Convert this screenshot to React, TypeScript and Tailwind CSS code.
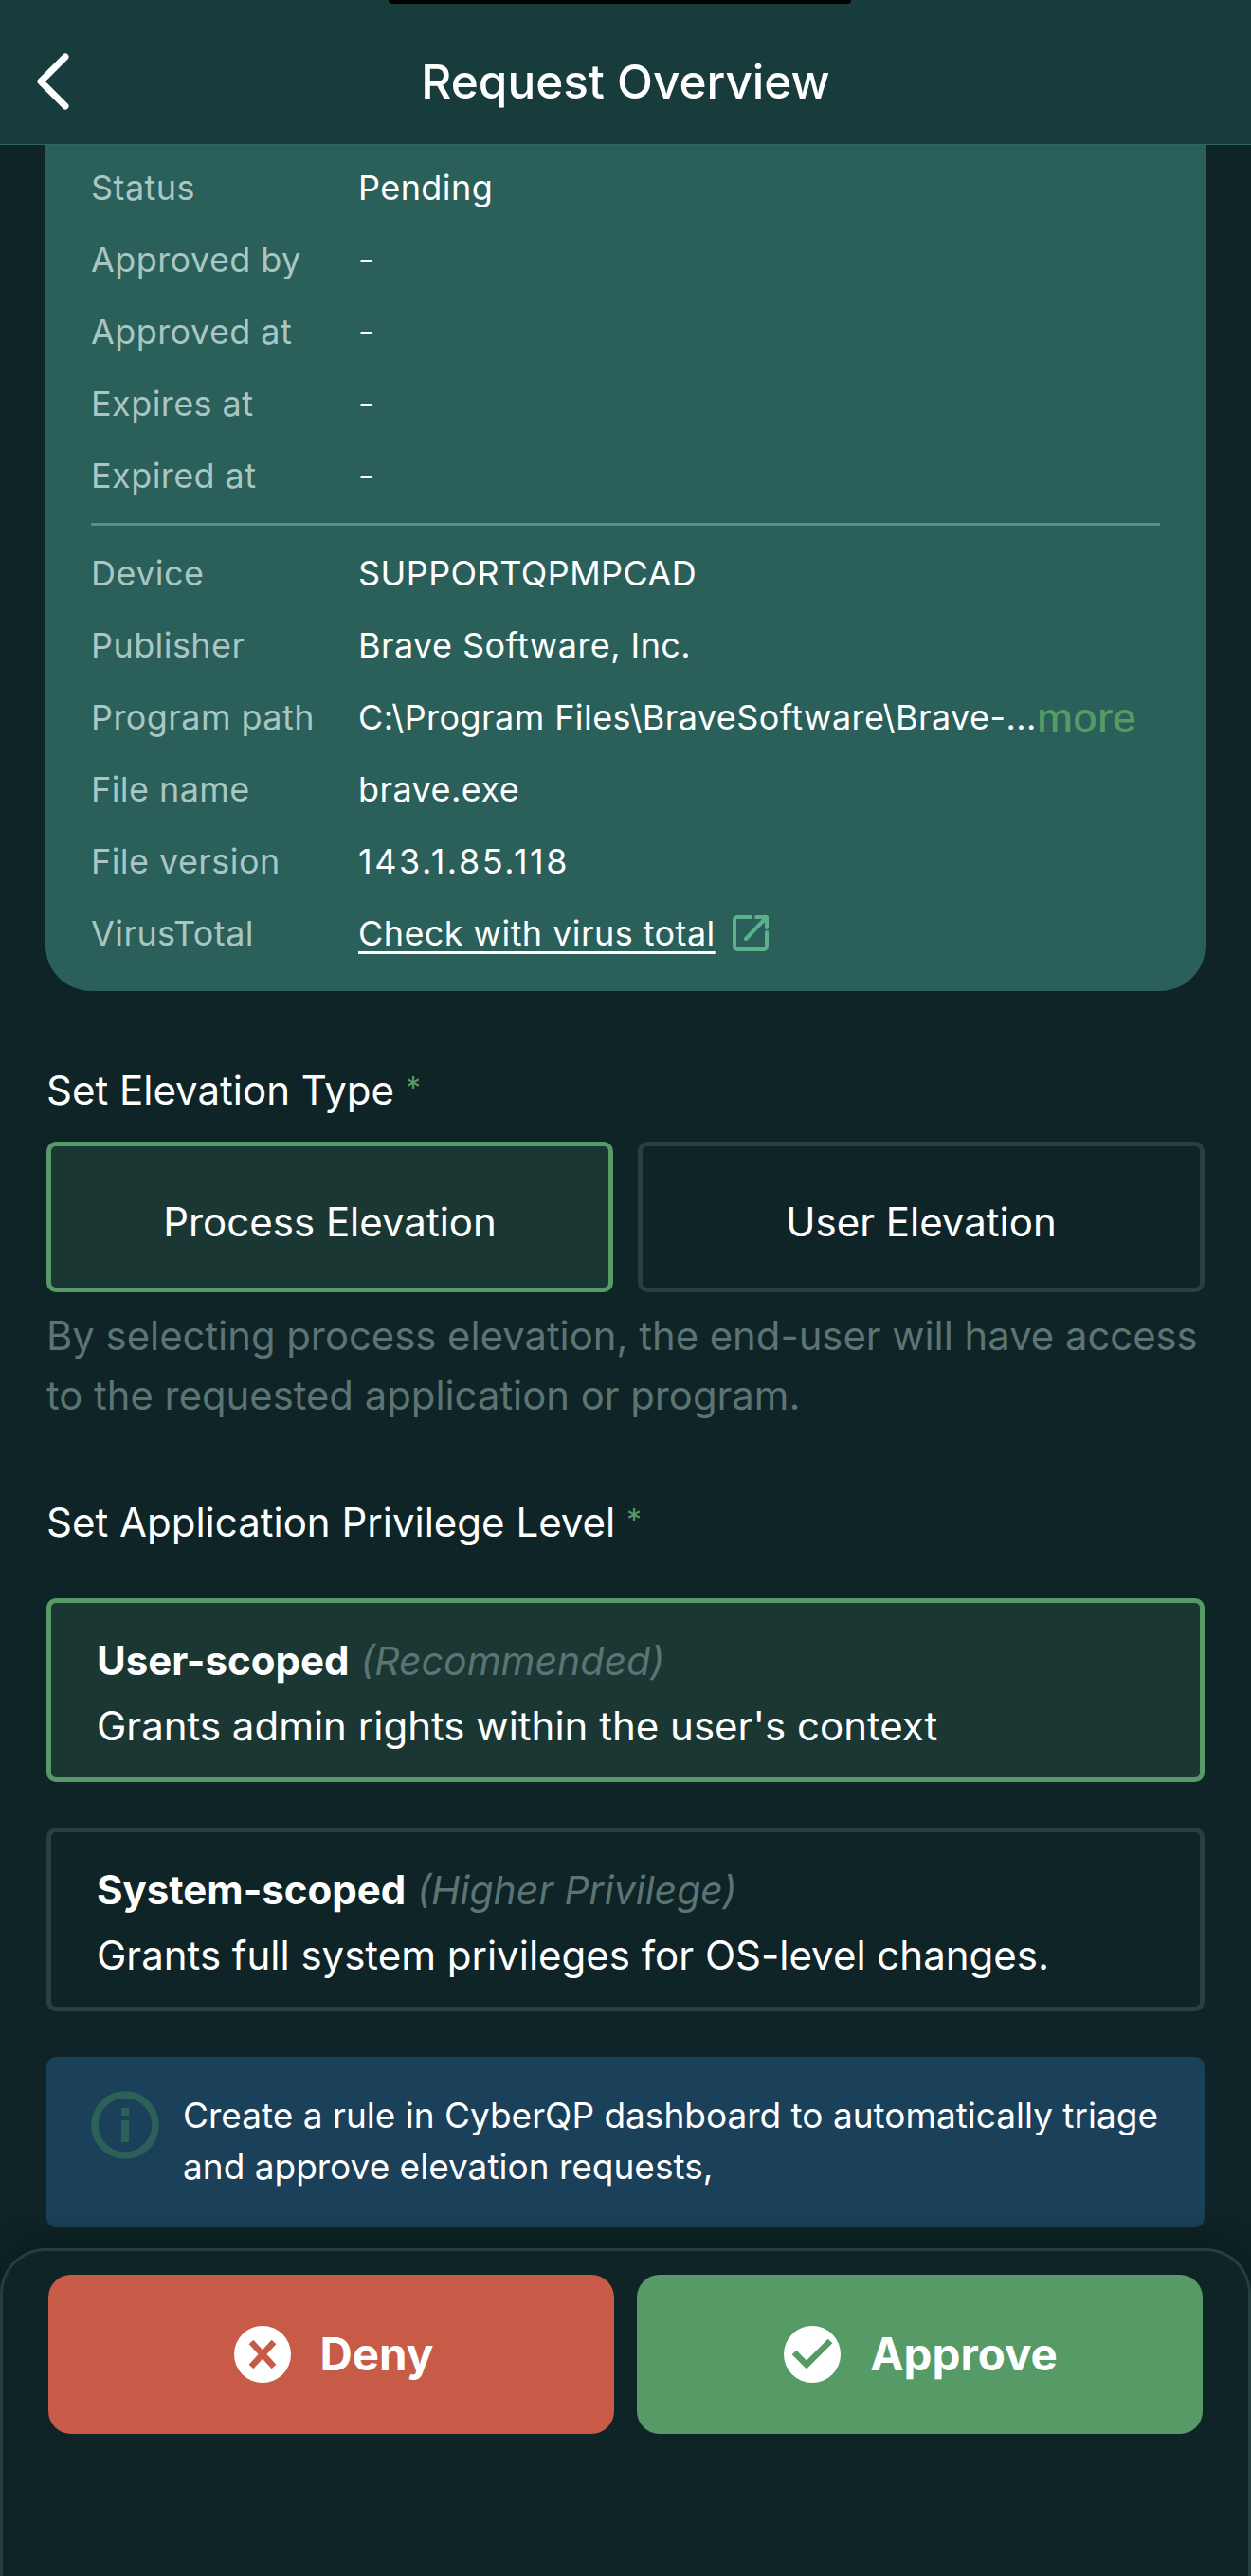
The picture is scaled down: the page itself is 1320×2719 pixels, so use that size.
const statusRows = [
  { label: 'Status', value: 'Pending' },
  { label: 'Approved by', value: '-' },
  { label: 'Approved at', value: '-' },
  { label: 'Expires at', value: '-' },
  { label: 'Expired at', value: '-' },
];

const deviceRows = [
  { label: 'Device', value: 'SUPPORTQPMPCAD' },
  { label: 'Publisher', value: 'Brave Software, Inc.' },
];

function Row({ label, children }: { label: string; children: React.ReactNode }) {
  return (
    <div className="flex h-[76px] items-center text-[36px] tracking-[0.012em]">
      <div className="w-[282px] shrink-0 text-[#a9c6c2]">{label}</div>
      <div className="flex items-center text-white">{children}</div>
    </div>
  );
}

function SectionLabel({ children }: { children: string }) {
  return (
    <div className="text-[42px] leading-[48px] text-white">
      {children} <span className="relative -top-[6px] text-[32px] text-[#569a65]">*</span>
    </div>
  );
}

export default function App() {
  return (
    <div className="flex h-[2719px] w-[1320px] flex-col overflow-hidden bg-[#0e2426] font-['Inter',sans-serif]">
      {/* Header */}
      <div className="relative flex h-[153px] shrink-0 items-center border-b border-[#33655f] bg-[#183b3b] pt-[20px] pl-[38px]">
        <div className="absolute top-0 left-[410px] h-[4px] w-[488px] rounded-b-[16px] bg-black" />
        <svg width="36" height="60" viewBox="0 0 36 60" fill="none" stroke="white" strokeWidth="7" strokeLinecap="round" strokeLinejoin="round">
          <path d="M31 4 5 30l26 26" />
        </svg>
        <div className="absolute left-0 w-full text-center text-[49.5px] font-medium text-white">Request Overview</div>
      </div>

      {/* Details card */}
      <div className="mx-[48px] shrink-0 rounded-b-[48px] bg-[#2a5f5a] px-[48px] pt-[7px] pb-[23px]">
        {statusRows.map(row => (
          <Row key={row.label} label={row.label}>{row.value}</Row>
        ))}
        <div className="mt-[12px] mb-[12px] h-[3px] bg-[#5c8f88]" />
        {deviceRows.map(row => (
          <Row key={row.label} label={row.label}>{row.value}</Row>
        ))}
        <Row label="Program path">
          <span>C:\Program Files\BraveSoftware\Brave-...</span>
          <span className="text-[43px] font-medium tracking-normal text-[#569a65]">more</span>
        </Row>
        <Row label="File name">brave.exe</Row>
        <Row label="File version">
          <span className="tracking-[0.07em]">143.1.85.118</span>
        </Row>
        <Row label="VirusTotal">
          <span className="underline underline-offset-[6px]">Check with virus total</span>
          <svg className="ml-[17px]" width="40" height="40" viewBox="0 0 40 40" fill="none" stroke="#5cb08c" strokeWidth="4" strokeLinecap="round" strokeLinejoin="round">
            <path d="M20 3H6a3 3 0 0 0-3 3v28a3 3 0 0 0 3 3h28a3 3 0 0 0 3-3V19" />
            <path d="M15 26 36 4M26 3h11v11" />
          </svg>
        </Row>
      </div>

      {/* Elevation type */}
      <div className="mx-[49px] mt-[81px] shrink-0">
        <SectionLabel>Set Elevation Type</SectionLabel>
        <div className="mt-[26px] flex gap-[26px]">
          <div className="flex h-[159px] w-[598px] items-center justify-center rounded-[10px] border-[5px] border-[#569a65] bg-[#1a3733] pt-[9px] text-[42px] text-white">
            Process Elevation
          </div>
          <div className="flex h-[159px] w-[598px] items-center justify-center rounded-[10px] border-[5px] border-[#2a3f42] pt-[9px] text-[42px] text-white">
            User Elevation
          </div>
        </div>
        <p className="mt-[15px] text-[41.8px] leading-[63px] text-[#5c7474]">
          By selecting process elevation, the end-user will have access to the requested application or program.
        </p>
      </div>

      {/* Privilege level */}
      <div className="mx-[49px] mt-[78px] shrink-0">
        <SectionLabel>Set Application Privilege Level</SectionLabel>
        <div className="mt-[52px] flex h-[194px] flex-col justify-center gap-[15px] rounded-[10px] border-[5px] border-[#569a65] bg-[#1a3733] pt-[7px] pl-[48px] text-[42px] leading-[54px] text-white">
          <div>
            <span className="font-bold">User-scoped</span> <span className="text-[41px] text-[#5c7474] italic">(Recommended)</span>
          </div>
          <div>Grants admin rights within the user's context</div>
        </div>
        <div className="mt-[48px] flex h-[194px] flex-col justify-center gap-[15px] rounded-[10px] border-[5px] border-[#2a3f42] pt-[7px] pl-[48px] text-[42px] leading-[54px] text-white">
          <div>
            <span className="font-bold">System-scoped</span> <span className="text-[41px] text-[#5c7474] italic">(Higher Privilege)</span>
          </div>
          <div>Grants full system privileges for OS-level changes.</div>
        </div>
        <div className="mt-[48px] flex h-[180px] items-start rounded-[10px] bg-[#1b4059] pt-[35px] pl-[47px] text-[37px] leading-[54px] text-white">
          <svg className="mt-[1px] shrink-0" width="72" height="72" viewBox="0 0 72 72" fill="none" stroke="#2b6158" strokeWidth="7.5">
            <circle cx="36" cy="36" r="32" />
            <path d="M36 18v8M36 31v23" strokeWidth="8" />
          </svg>
          <div className="ml-[25px]">
            Create a rule in CyberQP dashboard to automatically triage and approve elevation requests,
          </div>
        </div>
      </div>

      {/* Action bar */}
      <div className="mt-[22px] flex-1 rounded-t-[48px] border-t-[3px] border-r-[3px] border-l-[3px] border-[#243f40] bg-[#0e2426] px-[48px] pt-[25px] shadow-[0_-10px_30px_rgba(0,0,0,0.25)]">
        <div className="flex gap-[24px]">
          <div className="flex h-[168px] w-[597px] items-center justify-center gap-[31px] rounded-[24px] bg-[#c75b48] pl-[5px] text-[47.5px] font-bold text-white">
            <svg width="60" height="60" viewBox="0 0 60 60">
              <circle cx="30" cy="30" r="30" fill="white" />
              <path d="M18 17 42 43M42 17 18 43" stroke="#c75b48" strokeWidth="6.5" />
            </svg>
            Deny
          </div>
          <div className="flex h-[168px] w-[597px] items-center justify-center gap-[31px] rounded-[24px] bg-[#569a65] pl-[2px] text-[47.5px] font-bold text-white">
            <svg width="60" height="60" viewBox="0 0 60 60" fill="none">
              <circle cx="30" cy="30" r="30" fill="white" />
              <path d="M11 28 24 41 49 16" stroke="#569a65" strokeWidth="6.5" />
            </svg>
            Approve
          </div>
        </div>
      </div>
    </div>
  );
}
